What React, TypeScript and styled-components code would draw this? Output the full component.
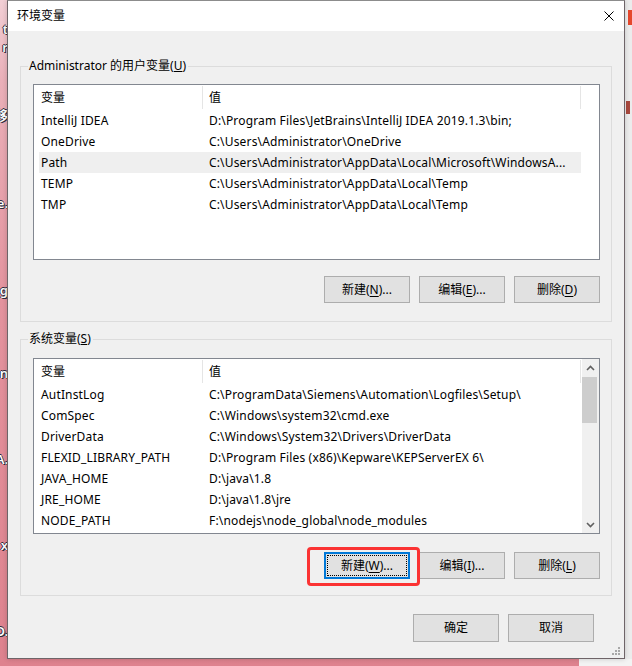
import React from "react";
import styled, { createGlobalStyle } from "styled-components";

const Global = createGlobalStyle`
  html, body { margin: 0; padding: 0; }
  body {
    width: 632px;
    height: 666px;
    overflow: hidden;
    font-family: "Noto Sans", "Noto Sans CJK SC", sans-serif;
    font-size: 12px;
    color: #000;
  }
  * { box-sizing: border-box; }
`;

const Desktop = styled.div`
  position: relative;
  width: 632px;
  height: 666px;
  overflow: hidden;
  padding-left: 7px;
  background:
    linear-gradient(#e5482c, #e5482c) 628px 10px / 4px 15px no-repeat,
    linear-gradient(#a9493e, #a9493e) 626px 101px / 4px 13px no-repeat,
    linear-gradient(#f3f3f3, #f3f3f3) 579px 659px / 53px 7px no-repeat,
    linear-gradient(90deg, transparent 625px, #ececec 625px) 0 0 / 100% 100% no-repeat,
    linear-gradient(180deg, #f2cfd5 0px, #eab0b9 80px, #e3939e 300px, #de828e 666px);
`;

const DesktopLabel = styled.span<{ $top: number }>`
  position: absolute;
  top: ${(p) => p.$top}px;
  right: 624px;
  color: #fff;
  font-size: 13px;
  font-weight: 600;
  line-height: 14px;
  white-space: nowrap;
  text-shadow: 1px 1px 0 #2a2a3a, -1px 0 0 #2a2a3a, 0 -1px 0 #2a2a3a;
`;

const Window = styled.div`
  position: relative;
  z-index: 1;
  width: 618px;
  height: 659px;
  background: #f0f0f0;
  border: 1px solid #6e6468;
  border-top-color: #8c8c8c;
  display: flex;
  flex-direction: column;
  box-shadow: 0 0 5px rgba(0, 0, 0, 0.18);
`;

const TitleBar = styled.div`
  height: 30px;
  flex: none;
  background: #fff;
  display: flex;
  align-items: center;
  justify-content: space-between;
  padding: 0 10px 0 9px;
`;

const Title = styled.span`
  font-size: 12px;
  line-height: 16px;
  color: #000;
`;

const CloseIcon = () => (
  <svg width="10" height="10" viewBox="0 0 10 10" aria-hidden>
    <path d="M0.5 0.5 L9.5 9.5 M9.5 0.5 L0.5 9.5" stroke="#000" strokeWidth="1" fill="none" />
  </svg>
);

const Body = styled.div`
  flex: 1;
  display: flex;
  flex-direction: column;
  padding: 35px 12px 0;
`;

const Group = styled.div<{ $gapTop: number; $btnTop: number; $padBottom: number; $listTop: number }>`
  margin-top: ${(p) => p.$gapTop}px;
  border: 1px solid #dcdcdc;
  padding: 0 11px ${(p) => p.$padBottom}px 12px;
  display: flex;
  flex-direction: column;

  & > .list {
    margin-top: ${(p) => p.$listTop}px;
  }
  & > .buttons {
    margin-top: ${(p) => p.$btnTop}px;
  }
`;

const GroupLabel = styled.div`
  align-self: flex-start;
  margin: -9px 0 0 -5px;
  padding: 0 2px 0 1px;
  background: #f0f0f0;
  line-height: 16px;
  font-size: 12px;
  color: #000;
  white-space: nowrap;
`;

const ListBox = styled.div`
  width: 567px;
  height: 176px;
  border: 1px solid #828790;
  background: #fff;
  display: flex;
  overflow: hidden;
`;

const ListContent = styled.div`
  flex: 1;
  min-width: 0;
  display: flex;
  flex-direction: column;
`;

const Header = styled.div`
  height: 25px;
  flex: none;
  display: flex;
  align-items: center;
`;

const HeaderCell = styled.div<{ $w: number; $pad: number }>`
  width: ${(p) => p.$w}px;
  padding-left: ${(p) => p.$pad}px;
  line-height: 25px;
  color: #000;
  white-space: nowrap;
`;

const HeaderSep = styled.span`
  width: 1px;
  height: 23px;
  background: #e5e5e5;
  flex: none;
`;

const Row = styled.div<{ $selected?: boolean }>`
  height: 21px;
  flex: none;
  margin-left: 5px;
  width: 542px;
  display: grid;
  grid-template-columns: 163px 379px;
  align-items: center;
  background: ${(p) => (p.$selected ? "#efefef" : "transparent")};
`;

const Cell = styled.div<{ $pad: number }>`
  padding-left: ${(p) => p.$pad}px;
  white-space: nowrap;
  overflow: hidden;
  line-height: 22px;
  letter-spacing: 0.16px;
  color: #000;
`;

const ScrollBar = styled.div`
  width: 17px;
  flex: none;
  background: #f0f0f0;
  display: flex;
  flex-direction: column;
  align-items: center;
`;

const ScrollArrow = styled.div`
  height: 17px;
  width: 17px;
  flex: none;
  display: flex;
  align-items: center;
  justify-content: center;
`;

const ScrollTrack = styled.div`
  flex: 1;
  width: 17px;
  padding: 1px 2px 0 0;
`;

const ScrollThumb = styled.div`
  width: 15px;
  height: 46px;
  background: #cdcdcd;
`;

const Chevron = ({ up }: { up?: boolean }) => (
  <svg width="9" height="6" viewBox="0 0 9 6" aria-hidden style={{ marginRight: 1 }}>
    <path
      d={up ? "M1 5 L4.5 1.5 L8 5" : "M1 1 L4.5 4.5 L8 1"}
      stroke="#606060"
      strokeWidth="1.6"
      fill="none"
    />
  </svg>
);

const ButtonRow = styled.div<{ $padRight?: number }>`
  display: flex;
  justify-content: flex-end;
  gap: 9px;
  padding-right: ${(p) => p.$padRight ?? 0}px;
`;

const Button = styled.button<{ $focused?: boolean; $tall?: boolean }>`
  width: 86px;
  height: ${(p) => (p.$tall ? 28 : 27)}px;
  padding: 0;
  background: #e1e1e1;
  border: 1px solid ${(p) => (p.$focused ? "#0078d7" : "#adadad")};
  box-shadow: ${(p) => (p.$focused ? "inset 0 0 0 1px #0078d7" : "none")};
  outline: ${(p) => (p.$focused ? "1px dotted #000" : "none")};
  outline-offset: -4px;
  font-family: "Noto Sans", "Noto Sans CJK SC", sans-serif;
  font-size: 12px;
  color: #000;
  line-height: 16px;
  cursor: default;

  u {
    text-underline-offset: 2px;
  }
`;

const Highlight = styled.span`
  position: relative;
  display: inline-flex;

  &::after {
    content: "";
    position: absolute;
    left: -17px;
    right: -10px;
    top: -5px;
    bottom: -7px;
    border: 3px solid #fb3333;
    border-radius: 4px;
    pointer-events: none;
  }
`;

const Footer = styled.div`
  margin-top: 18px;
`;

const Grip = styled.svg`
  position: absolute;
  right: 3px;
  bottom: 2px;
`;

type Item = { name: string; value: string; selected?: boolean };

const userVars: Item[] = [
  { name: "IntelliJ IDEA", value: "D:\\Program Files\\JetBrains\\IntelliJ IDEA 2019.1.3\\bin;" },
  { name: "OneDrive", value: "C:\\Users\\Administrator\\OneDrive" },
  {
    name: "Path",
    value: "C:\\Users\\Administrator\\AppData\\Local\\Microsoft\\WindowsA...",
    selected: true,
  },
  { name: "TEMP", value: "C:\\Users\\Administrator\\AppData\\Local\\Temp" },
  { name: "TMP", value: "C:\\Users\\Administrator\\AppData\\Local\\Temp" },
];

const sysVars: Item[] = [
  { name: "AutInstLog", value: "C:\\ProgramData\\Siemens\\Automation\\Logfiles\\Setup\\" },
  { name: "ComSpec", value: "C:\\Windows\\system32\\cmd.exe" },
  { name: "DriverData", value: "C:\\Windows\\System32\\Drivers\\DriverData" },
  { name: "FLEXID_LIBRARY_PATH", value: "D:\\Program Files (x86)\\Kepware\\KEPServerEX 6\\" },
  { name: "JAVA_HOME", value: "D:\\java\\1.8" },
  { name: "JRE_HOME", value: "D:\\java\\1.8\\jre" },
  { name: "NODE_PATH", value: "F:\\nodejs\\node_global\\node_modules" },
];

const VarList = ({ items, scroll }: { items: Item[]; scroll?: boolean }) => (
  <ListBox className="list">
    <ListContent>
      <Header>
        <HeaderCell $w={168} $pad={7}>变量</HeaderCell>
        <HeaderSep />
        <HeaderCell $w={377} $pad={6}>值</HeaderCell>
        <HeaderSep />
      </Header>
      {items.map((it) => (
        <Row key={it.name} $selected={it.selected}>
          <Cell $pad={2}>{it.name}</Cell>
          <Cell $pad={7}>{it.value}</Cell>
        </Row>
      ))}
    </ListContent>
    {scroll && (
      <ScrollBar>
        <ScrollArrow>
          <Chevron up />
        </ScrollArrow>
        <ScrollTrack>
          <ScrollThumb />
        </ScrollTrack>
        <ScrollArrow>
          <Chevron />
        </ScrollArrow>
      </ScrollBar>
    )}
  </ListBox>
);

const desktopLabels: { top: number; text: string }[] = [
  { top: 22, text: "t" },
  { top: 40, text: "r" },
  { top: 108, text: "移" },
  { top: 196, text: "e." },
  { top: 283, text: "g" },
  { top: 366, text: "n" },
  { top: 452, text: "A." },
  { top: 538, text: "x" },
  { top: 624, text: "D." },
];

export default function App() {
  return (
    <>
      <Global />
      <Desktop>
        {desktopLabels.map((l) => (
          <DesktopLabel key={l.top} $top={l.top}>
            {l.text}
          </DesktopLabel>
        ))}
        <Window>
          <TitleBar>
            <Title>环境变量</Title>
            <CloseIcon />
          </TitleBar>
          <Body>
            <Group $gapTop={0} $listTop={10} $btnTop={16} $padBottom={18}>
              <GroupLabel>
                Administrator 的用户变量(<u>U</u>)
              </GroupLabel>
              <VarList items={userVars} />
              <ButtonRow className="buttons">
                <Button>
                  新建(<u>N</u>)...
                </Button>
                <Button>
                  编辑(<u>E</u>)...
                </Button>
                <Button>
                  删除(<u>D</u>)
                </Button>
              </ButtonRow>
            </Group>
            <Group $gapTop={17} $listTop={11} $btnTop={18} $padBottom={16}>
              <GroupLabel>
                系统变量(<u>S</u>)
              </GroupLabel>
              <VarList items={sysVars} scroll />
              <ButtonRow className="buttons">
                <Highlight>
                  <Button $focused>
                    新建(<u>W</u>)...
                  </Button>
                </Highlight>
                <Button>
                  编辑(<u>I</u>)...
                </Button>
                <Button>
                  删除(<u>L</u>)
                </Button>
              </ButtonRow>
            </Group>
            <Footer>
              <ButtonRow $padRight={18}>
                <Button $tall>确定</Button>
                <Button $tall>取消</Button>
              </ButtonRow>
            </Footer>
          </Body>
          <Grip width="9" height="9" viewBox="0 0 9 9" aria-hidden>
            <g fill="#a8a8a8">
              <rect x="6" y="0" width="2" height="2" />
              <rect x="3" y="3" width="2" height="2" />
              <rect x="6" y="3" width="2" height="2" />
              <rect x="0" y="6" width="2" height="2" />
              <rect x="3" y="6" width="2" height="2" />
              <rect x="6" y="6" width="2" height="2" />
            </g>
          </Grip>
        </Window>
      </Desktop>
    </>
  );
}
